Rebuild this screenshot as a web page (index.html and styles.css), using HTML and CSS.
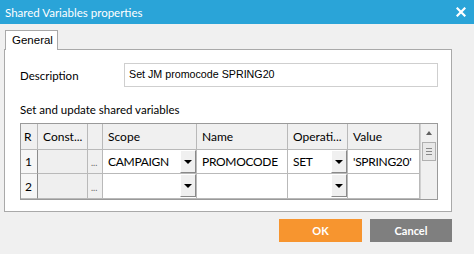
FILE: index.html
```html
<!DOCTYPE html>
<html>
<head>
<meta charset="utf-8">
<link rel="stylesheet" href="styles.css">
</head>
<body>
<div class="win">
  <div class="titlebar">
    <span class="title">Shared Variables properties</span>
    <svg class="close" width="10" height="10" viewBox="0 0 10 10"><path d="M1.5 1.5 L8.5 8.5 M8.5 1.5 L1.5 8.5" stroke="#fff" stroke-width="2.2" stroke-linecap="square"/></svg>
  </div>
  <div class="content">
    <div class="tabs"><div class="tab">General</div></div>
    <div class="panel">
      <div class="desc-row">
        <span class="label">Description</span>
        <div class="input">Set JM promocode SPRING20</div>
      </div>
      <div class="section">Set and update shared variables</div>
      <div class="gridwrap">
        <div class="grid">
          <div class="h c-r">R</div>
          <div class="h">Const...</div>
          <div class="h"></div>
          <div class="h">Scope</div>
          <div class="h">Name</div>
          <div class="h">Operati...</div>
          <div class="h">Value</div>

          <div class="rh">1</div>
          <div class="cst"></div>
          <div class="dots">...</div>
          <div class="cell combo"><span>CAMPAIGN</span><span class="dd"><i></i></span></div>
          <div class="cell caps">PROMOCODE</div>
          <div class="cell combo"><span>SET</span><span class="dd"><i></i></span></div>
          <div class="cell caps">'SPRING20'</div>

          <div class="rh">2</div>
          <div class="cst"></div>
          <div class="dots">...</div>
          <div class="cell combo"><span></span><span class="dd"><i></i></span></div>
          <div class="cell"></div>
          <div class="cell combo"><span></span><span class="dd"><i></i></span></div>
          <div class="cell"></div>
        </div>
        <div class="scroll">
          <div class="up"><i></i></div>
          <div class="thumb"><b></b><b></b><b></b></div>
        </div>
      </div>
    </div>
    <div class="buttons">
      <div class="btn ok">OK</div>
      <div class="btn cancel">Cancel</div>
    </div>
  </div>
</div>
</body>
</html>
```
FILE: styles.css
```css
* { box-sizing: border-box; }
html, body { margin: 0; padding: 0; }
body { width: 474px; height: 254px; background: #f0f0f0; overflow: hidden; font-family: Lato, "Noto Sans", sans-serif; color: #000; }
.win { width: 474px; height: 254px; display: flex; flex-direction: column; }
.titlebar { height: 24px; background: #2aa4d8; display: flex; align-items: center; justify-content: space-between; padding: 0 8px 0 5px; }
.title { color: #fff; font-size: 11.5px; }
.close { display: block; }
.content { flex: 1; padding: 6px 22px 0 4px; display: flex; flex-direction: column; }
.tabs { display: flex; padding-left: 1px; height: 20px; position: relative; z-index: 1; }
.tab { width: 53px; height: 20px; background: #fff; border: 1px solid #a9a9a9; border-bottom: none; font-family: "Liberation Sans", Arial, sans-serif; font-size: 11.5px; padding: 3px 0 0 6px; }
.panel { height: 163px; margin-top: -1px; background: #fff; border: 1px solid #a9a9a9; padding: 13px 0 0 15px; }
.desc-row { display: flex; align-items: center; height: 24px; }
.label { width: 104px; font-size: 11.5px; }
.input { width: 314px; height: 24px; border: 1px solid #cfcfcf; font-family: "Liberation Sans", Arial, sans-serif; font-size: 10.7px; padding: 4px 0 0 4px; }
.section { font-size: 11.5px; margin-top: 16px; height: 20px; }
.gridwrap { display: flex; width: 418px; border: 1px solid #9a9a9a; }
.grid { display: grid; grid-template-columns: 17px 50px 15px 94px 91px 60px 72px; grid-template-rows: 26px 24px 25px; width: 399px; }
.grid > div { border-right: 1px solid #b9b9b9; border-bottom: 1px solid #b9b9b9; font-size: 12px; display: flex; align-items: center; padding-left: 5px; white-space: nowrap; overflow: hidden; }
.combo span:first-child, .caps { letter-spacing: -0.3px; }
.h { background: #f0f0f0; }
.h.c-r { padding-left: 3px; }
.rh { background: #f6f6f6; padding-left: 4px !important; border-right-color: #8c8c8c !important; }
.cst { background: #efefef; }
.dots { background: #f0f0f0; font-size: 9px !important; color: #666; align-items: flex-end !important; padding: 0 0 5px 3px !important; }
.cell { background: #fff; }
.combo { justify-content: space-between; padding-right: 0 !important; }
.dd { width: 16px; height: 23px; align-self: flex-start; background: #f0f0f0; border-left: 1px solid #fff; border-top: 1px solid #fff; border-right: 1px solid #8a8a8a; border-bottom: 1px solid #8a8a8a; display: flex; align-items: center; justify-content: center; }
.dd i { width: 0; height: 0; border-left: 4px solid transparent; border-right: 4px solid transparent; border-top: 4px solid #000; }
.scroll { width: 17px; background: #f0f0f0; border-left: 1px solid #d0d0d0; display: flex; flex-direction: column; align-items: center; }
.up { height: 17px; width: 100%; display: flex; align-items: center; justify-content: center; }
.up i { width: 0; height: 0; border-left: 3px solid transparent; border-right: 3px solid transparent; border-bottom: 4px solid #606060; }
.thumb { width: 14px; height: 19px; margin-top: 1px; background: #e8e8e8; border: 1px solid #b0b0b0; display: flex; flex-direction: column; align-items: center; justify-content: center; gap: 2px; }
.thumb b { display: block; width: 6px; height: 1px; background: #888; }
.buttons { display: flex; justify-content: flex-end; gap: 8px; margin-top: 7px; }
.btn { width: 83px; height: 23px; color: #fff; font-weight: bold; font-size: 11px; display: flex; align-items: center; justify-content: center; }
.ok { background: #f7952f; }
.cancel { background: #7f7f7f; width: 82px; }
```
